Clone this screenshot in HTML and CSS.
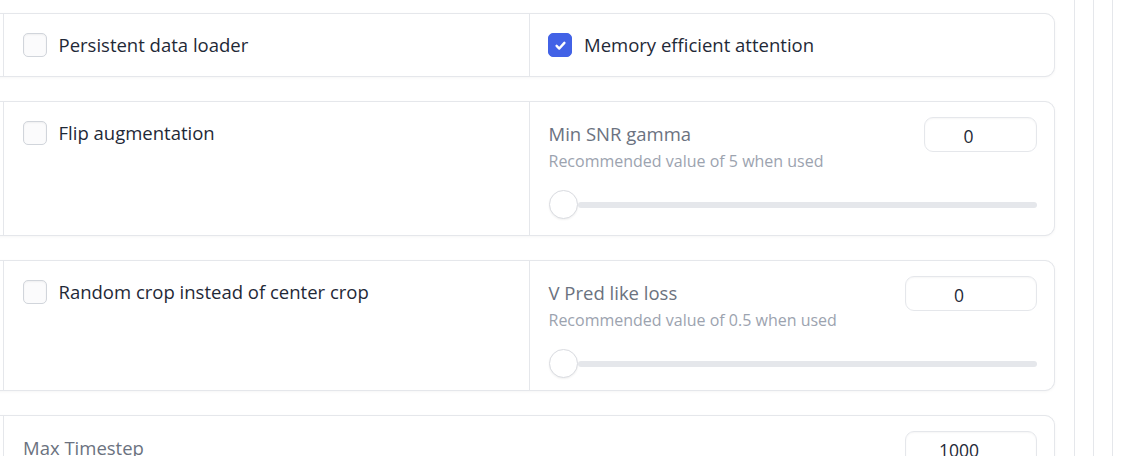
FILE: index.html
```html
<!DOCTYPE html>
<html lang="en">
<head>
<meta charset="utf-8">
<title>Training options</title>
<link rel="stylesheet" href="styles.css">
</head>
<body>
<div class="page">
  <div class="stack">
    <div class="form form-one">
      <div class="col stub"></div>
      <div class="col check-col">
        <label class="check"><span class="box"></span><span class="check-text">Persistent data loader</span></label>
      </div>
      <div class="col check-col">
        <label class="check"><span class="box box-on"><svg viewBox="0 0 24 24" width="17" height="17"><path d="M6.5 12.5l3.8 3.8 7.2-8" fill="none" stroke="#fff" stroke-width="3.4" stroke-linecap="round" stroke-linejoin="round"/></svg></span><span class="check-text">Memory efficient attention</span></label>
      </div>
    </div>

    <div class="form form-two">
      <div class="col stub"></div>
      <div class="col check-col">
        <label class="check"><span class="box"></span><span class="check-text">Flip augmentation</span></label>
      </div>
      <div class="col field-col">
        <div class="field-head">
          <span class="field-label">Min SNR gamma</span>
          <div class="num num-narrow">0</div>
        </div>
        <div class="info">Recommended value of 5 when used</div>
        <div class="slider"><span class="thumb"></span><span class="track"></span></div>
      </div>
    </div>

    <div class="form form-three">
      <div class="col stub"></div>
      <div class="col check-col">
        <label class="check"><span class="box"></span><span class="check-text">Random crop instead of center crop</span></label>
      </div>
      <div class="col field-col">
        <div class="field-head">
          <span class="field-label">V Pred like loss</span>
          <div class="num">0</div>
        </div>
        <div class="info">Recommended value of 0.5 when used</div>
        <div class="slider"><span class="thumb"></span><span class="track"></span></div>
      </div>
    </div>

    <div class="form form-four">
      <div class="col wide-col">
        <div class="field-head">
          <span class="field-label">Max Timestep</span>
          <div class="num">1000</div>
        </div>
      </div>
    </div>
  </div>
  <div class="rails">
    <span class="rail"></span>
    <span class="rail"></span>
    <span class="rail"></span>
  </div>
</div>
</body>
</html>
```

FILE: styles.css
```css
* { box-sizing: border-box; }

html, body {
  margin: 0;
  padding: 0;
  background: #ffffff;
}

body {
  font-family: "Open Sans", "Liberation Sans", sans-serif;
  color: #1f2937;
  width: 1123px;
  height: 456px;
  overflow: hidden;
}

.page {
  display: flex;
  height: 456px;
}

.stack {
  display: flex;
  flex-direction: column;
  gap: 24px;
  padding-top: 13px;
  margin-left: -21px;
  width: 1076px;
  flex: none;
}

.form {
  border: 1px solid #e5e7eb;
  border-radius: 10px;
  background: #e5e7eb;
  display: grid;
  grid-template-columns: 23px 1fr 1fr;
  gap: 1px;
  overflow: hidden;
  box-shadow: 0 1px 3px rgba(0, 0, 0, 0.04);
  flex: none;
}

.form-four {
  grid-template-columns: 23px 1fr;
  height: 80px;
}

.form-four::before {
  content: "";
  background: #ffffff;
}

.col {
  background: #ffffff;
}

.check-col {
  padding: 19px 17px 19px 18.5px;
}

.check {
  display: flex;
  align-items: center;
  gap: 12px;
  font-size: 18.5px;
  line-height: 24px;
  color: #1f2937;
}

.box {
  width: 24px;
  height: 24px;
  border: 1px solid #d1d5db;
  border-radius: 5px;
  background: #fbfbfc;
  box-shadow: inset 0 1px 2px rgba(0, 0, 0, 0.05);
  display: flex;
  align-items: center;
  justify-content: center;
  flex: none;
}

.box-on {
  background: #4262e6;
  border-color: #4262e6;
  box-shadow: none;
}

.field-col {
  padding: 15px 17px 16px 19px;
  display: flex;
  flex-direction: column;
}

.form-three .field-col {
  padding-bottom: 12px;
}

.wide-col {
  padding: 15px 17px 0 19px;
}

.field-head {
  display: flex;
  align-items: center;
  justify-content: space-between;
  height: 35px;
}

.field-label {
  font-size: 18.5px;
  color: #6b7280;
  padding-bottom: 3px;
}

.num {
  width: 132px;
  height: 35px;
  border: 1px solid #e5e7eb;
  border-radius: 9px;
  background: #ffffff;
  box-shadow: inset 0 1px 2px rgba(0, 0, 0, 0.04);
  display: flex;
  align-items: center;
  justify-content: center;
  font-size: 17.5px;
  color: #1f2937;
  padding: 3px 24px 0 0;
}

.num-narrow {
  width: 113px;
}

.info {
  font-size: 16px;
  line-height: 18px;
  color: #9ca3af;
}

.slider {
  margin-top: 20px;
  height: 29px;
  display: flex;
  align-items: center;
}

.thumb {
  width: 29px;
  height: 29px;
  border-radius: 50%;
  border: 1px solid #d9dbe0;
  background: #ffffff;
  box-shadow: 0 1px 2px rgba(0, 0, 0, 0.06);
  flex: none;
}

.track {
  flex: 1;
  height: 6px;
  border-radius: 3px;
  background: #e5e7eb;
}

.rails {
  display: flex;
  gap: 18px;
  margin-left: 19px;
  height: 456px;
}

.rail {
  width: 1px;
  height: 100%;
  background: #e5e7eb;
}
```
